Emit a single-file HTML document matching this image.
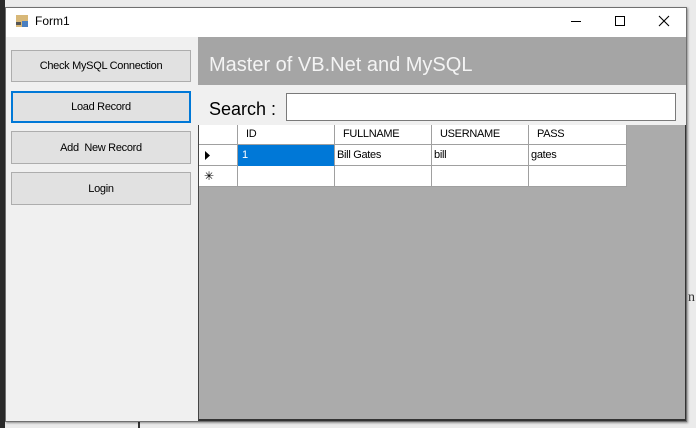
<!DOCTYPE html>
<html><head><meta charset="utf-8"><style>
*{margin:0;padding:0;box-sizing:border-box}
body{width:696px;height:428px;overflow:hidden;background:#ebebeb;position:relative;font-family:"Liberation Sans",sans-serif}
.abs{position:absolute}
.btn{position:absolute;left:11px;width:180px;background:#e1e1e1;border:1px solid #adadad;font-size:11px;color:#000;text-align:center;letter-spacing:-0.3px}
.cell{position:absolute;background:#fff;border-right:1px solid #a0a0a0;border-bottom:1px solid #a0a0a0;font-size:11px;padding-left:4px;letter-spacing:-0.3px}
</style></head><body>
<div class="abs" style="left:0;top:0;width:5px;height:428px;background:#2a2a2a"></div>
<div class="abs" style="left:138px;top:421px;width:2px;height:7px;background:#333"></div>
<div class="abs" style="left:5px;top:7px;width:682px;height:415px;background:#f0f0f0;border:1px solid #707070;box-shadow:1px 1px 2px rgba(0,0,0,.4)"></div>
<div class="abs" style="left:6px;top:8px;width:680px;height:29px;background:#fff"></div>
<svg class="abs" style="left:15px;top:14px" width="14" height="14" viewBox="0 0 14 14"><rect x="1" y="1" width="12" height="12" fill="#d8b878"/><rect x="7" y="7" width="6" height="6" fill="#4a7fc0"/><rect x="1" y="8" width="5" height="3" fill="#555"/></svg>
<div class="abs" style="left:35px;top:14px;font-size:12px;color:#000">Form1</div>
<div class="abs" style="left:571px;top:21px;width:10px;height:1px;background:#000"></div>
<div class="abs" style="left:615px;top:16px;width:10px;height:10px;border:1px solid #000"></div>
<svg class="abs" style="left:658px;top:15px" width="12" height="12" viewBox="0 0 12 12"><path d="M1 1L11 11M11 1L1 11" stroke="#000" stroke-width="1.1"/></svg>
<div class="btn" style="top:50px;height:32px;line-height:31px">Check MySQL Connection</div>
<div class="btn" style="top:91px;height:32px;line-height:29px;border:2px solid #0078d7">Load Record</div>
<div class="btn" style="top:131px;height:33px;line-height:32px">Add&nbsp; New Record</div>
<div class="btn" style="top:172px;height:33px;line-height:32px">Login</div>
<div class="abs" style="left:198px;top:37px;width:488px;height:48px;background:#a5a5a5"></div>
<div class="abs" style="left:209px;top:54px;font-size:20px;color:#f4f4f4">Master of VB.Net and MySQL</div>
<div class="abs" style="left:209px;top:99px;font-size:18px;color:#000">Search :</div>
<div class="abs" style="left:286px;top:93px;width:390px;height:28px;background:#fff;border:1px solid #7a7a7a"></div>
<div class="abs" style="left:198px;top:125px;width:488px;height:296px;background:#ababab;border-left:1px solid #444;border-bottom:2px solid #333;border-right:1px solid #333"></div>
<div class="cell" style="left:199px;top:125px;width:39px;height:20px"></div>
<div class="cell" style="left:238px;top:125px;width:97px;height:20px;line-height:19px;padding-left:8px">ID</div>
<div class="cell" style="left:335px;top:125px;width:97px;height:20px;line-height:19px;padding-left:8px">FULLNAME</div>
<div class="cell" style="left:432px;top:125px;width:97px;height:20px;line-height:19px;padding-left:8px">USERNAME</div>
<div class="cell" style="left:529px;top:125px;width:98px;height:20px;line-height:19px;padding-left:8px">PASS</div>
<div class="cell" style="left:199px;top:145px;width:39px;height:21px"></div>
<svg class="abs" style="left:205px;top:151px" width="6" height="9"><path d="M0 0L5 4.5L0 9Z" fill="#000"/></svg>
<div class="cell" style="left:238px;top:145px;width:97px;height:21px;line-height:20px;background:#0078d7;color:#fff;border-bottom-color:#0078d7">1</div>
<div class="cell" style="left:335px;top:145px;width:97px;height:21px;line-height:20px;padding-left:2px">Bill Gates</div>
<div class="cell" style="left:432px;top:145px;width:97px;height:21px;line-height:20px;padding-left:2px">bill</div>
<div class="cell" style="left:529px;top:145px;width:98px;height:21px;line-height:20px;padding-left:2px">gates</div>
<div class="cell" style="left:199px;top:166px;width:39px;height:21px;font-size:12px;line-height:20px;padding-left:5px">&#x2733;</div>
<div class="cell" style="left:238px;top:166px;width:97px;height:21px"></div>
<div class="cell" style="left:335px;top:166px;width:97px;height:21px"></div>
<div class="cell" style="left:432px;top:166px;width:97px;height:21px"></div>
<div class="cell" style="left:529px;top:166px;width:98px;height:21px"></div>
<div class="abs" style="left:688px;top:290px;font-size:14px;font-family:'Liberation Serif',serif;color:#333">n</div>
</body></html>
